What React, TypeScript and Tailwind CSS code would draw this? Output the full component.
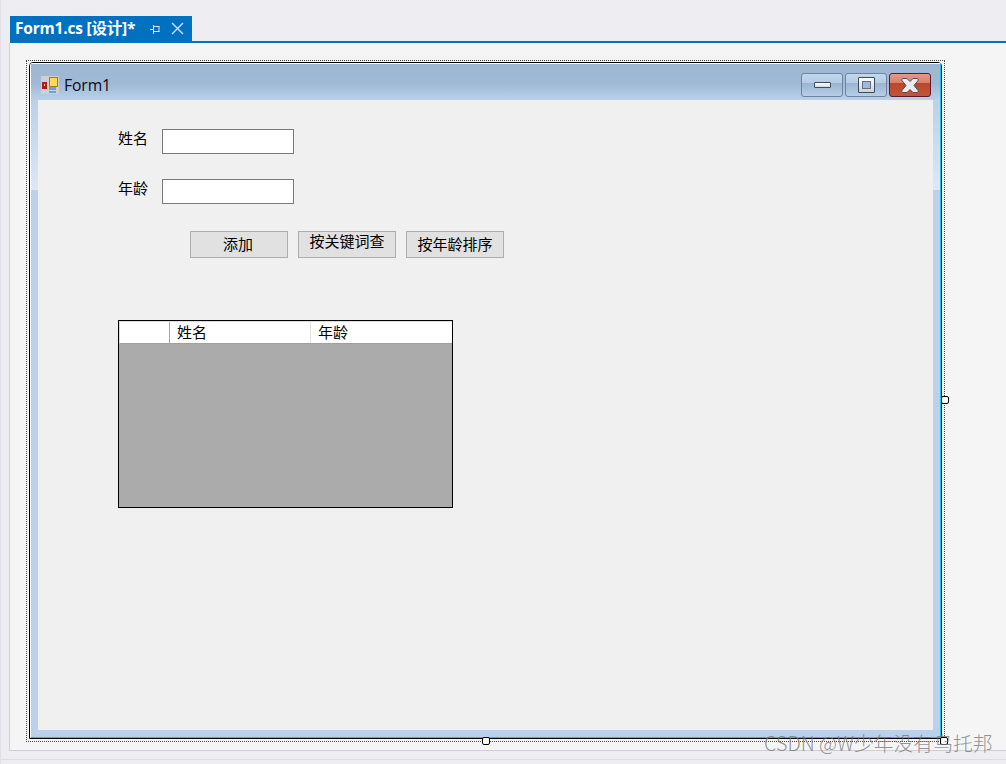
import React from "react";

const cjk = "font-['Noto_Sans_CJK_SC','Liberation_Sans',sans-serif]";

function Handle({ className }: { className: string }) {
  return <div className={`absolute w-[8px] h-[8px] bg-white border border-black rounded-[2px] ${className}`} />;
}

function CaptionButton({ close, children }: { close?: boolean; children: React.ReactNode }) {
  return (
    <div
      className={`relative w-[42px] h-[24px] rounded-[3px] border flex items-center justify-center overflow-hidden ${
        close
          ? "border-[#5a1c2c] bg-[linear-gradient(#e39a88_0%,#d9806c_40%,#b9472c_41%,#c25539_100%)]"
          : "border-[#6c83a3] bg-[linear-gradient(#c3d6ea_0%,#b6cce4_40%,#9ab4d0_41%,#b7cee6_100%)]"
      }`}
    >
      {children}
    </div>
  );
}

function FormIcon() {
  return (
    <svg width="18" height="18" viewBox="0 0 18 18" className="shrink-0">
      <rect x="0" y="0" width="18" height="18" fill="#cfd0cf" />
      <rect x="1" y="6" width="5" height="7" fill="#b01d13" />
      <rect x="3" y="8" width="1" height="2" fill="#f0c0b0" />
      <rect x="8.5" y="1.5" width="8" height="9" fill="#fbd95b" stroke="#a97c12" />
      <rect x="8" y="11" width="7" height="6" fill="#6d9fe0" />
      <rect x="8" y="14" width="7" height="1" fill="#bcd4f2" />
    </svg>
  );
}

function DataGrid() {
  return (
    <div className="w-[335px] h-[188px] border border-black bg-[#ababab] flex flex-col">
      <div className={`h-[23px] bg-white border-t border-l border-[#dcdcdc] border-b-[1px] border-b-[#a0a0a0] flex text-[15px] leading-[19px] text-black ${cjk}`}>
        <div className="w-[50px] border-r border-[#a8a8a8]" />
        <div className="w-[141px] pl-[7px] border-r border-[#e3e3e3]">姓名</div>
        <div className="flex-1 pl-[7px]">年龄</div>
      </div>
    </div>
  );
}

function FormButton({ label, up, nudge }: { label: string; up?: boolean; nudge?: boolean }) {
  return (
    <div className={`w-[98px] h-[27px] bg-[#e1e1e1] border border-[#adadad] text-center text-[15px] text-black ${up ? "leading-[17px]" : "leading-[23px]"} ${nudge ? "pr-[2px]" : ""} ${cjk}`}>
      {label}
    </div>
  );
}

function Field({ label, className }: { label: string; className?: string }) {
  return (
    <div className={`flex gap-[14px] ${className ?? ""}`}>
      <div className={`w-[30px] h-[20px] leading-[18px] text-[15px] whitespace-nowrap text-black ${cjk}`}>{label}</div>
      <div className="w-[132px] h-[25px] bg-white border border-[#7a7a7a]" />
    </div>
  );
}

export default function App() {
  return (
    <div className="relative w-[1006px] h-[764px] overflow-hidden bg-[#eeeef2] flex flex-col border-l border-[#dfdfe8]">
      <div className="pl-[9px] pt-[16px]">
        <div className="w-[182px] h-[25px] bg-[#0070c0] flex items-center pl-[5px] text-white">
          <span className="w-[120px] shrink-0 text-[15.5px] font-bold leading-none whitespace-nowrap font-['Open_Sans','Noto_Sans_CJK_SC',sans-serif] tracking-[-0.2px]">Form1.cs [设计]*</span>
          <svg width="12" height="12" viewBox="0 0 12 12" className="ml-[14px]" fill="none" stroke="#d5e6f5" strokeWidth="1">
            <path d="M1 6.5H4.5M4.5 2V11M4.5 3.5H10.5M4.5 8.5H10.5M10 3.5V8.5" />
          </svg>
          <svg width="13" height="13" viewBox="0 0 13 13" className="ml-[10px]" fill="none" stroke="#d5e6f5" strokeWidth="1.4">
            <path d="M1 1L12 12M12 1L1 12" />
          </svg>
        </div>
      </div>
      <div className="h-[2px] ml-[9px] bg-[#0070c0]" />
      <div className="ml-[8px] h-[708px] bg-[#f5f5f5] border-l border-b border-[#cccedb] pl-[16px] pt-[17px]">
        <div className="relative w-[919px] h-[682px] border border-dotted border-[#444444] pl-[2px] pt-[1px]">
          <div className="w-[913px] h-[677px] border border-black rounded-tl-[4px] rounded-tr-[4px]">
            <div className="h-full border-l border-t border-white border-r-[#14c3e8] border-b-[#14c3e8] border-r border-b rounded-tl-[3px] flex flex-col">
              <div className="h-[36px] shrink-0 bg-[linear-gradient(#9db6d2,#a0b9d5_55%,#b9d1ea)] flex items-start pl-[10px] pr-[9px]">
                <div className="mt-[12px]"><FormIcon /></div>
                <span className="mt-[11px] ml-[5px] text-[15.7px] leading-[20px] text-[#0a0a14] font-['Open_Sans',sans-serif] tracking-[-0.1px]">Form1</span>
                <div className="ml-auto mt-[9px] flex gap-[2px]">
                  <CaptionButton>
                    <div className="w-[17px] h-[6px] bg-[linear-gradient(#ffffff,#d8d8d8)] border border-[#3d4a63] rounded-[1px]" />
                  </CaptionButton>
                  <CaptionButton>
                    <div className="w-[17px] h-[16px] bg-[linear-gradient(#ffffff,#d0d0d0)] border border-[#3d4a63] rounded-[1px] p-[3px]">
                      <div className="h-full bg-[#9fb9d6] border border-[#5d708c]" />
                    </div>
                  </CaptionButton>
                  <CaptionButton close>
                    <svg width="18" height="17" viewBox="0 0 18 17">
                      <path
                        d="M1.5 1.5H6L9 4.5L12 1.5H16.5L17.5 3L13 8.5L17.5 14L16.5 15.5H12L9 12.5L6 15.5H1.5L0.5 14L5 8.5L0.5 3Z"
                        fill="#ececec"
                        stroke="#4e4e68"
                        strokeWidth="1"
                      />
                    </svg>
                  </CaptionButton>
                </div>
              </div>
              <div className="flex flex-1 min-h-0">
                <div className="w-[7px] bg-[#b9d1ea]">
                  <div className="h-[90px] bg-[linear-gradient(#b9d1ea,#dce8f5)]" />
                </div>
                <div className="flex-1 bg-[#f0f0f0] pl-[80px] pt-[29px]">
                  <Field label="姓名" />
                  <Field label="年龄" className="mt-[25px]" />
                  <div className="mt-[27px] ml-[72px] flex gap-[10px]">
                    <FormButton label="添加" nudge />
                    <FormButton label="按关键词查" up />
                    <FormButton label="按年龄排序" />
                  </div>
                  <div className="mt-[62px]">
                    <DataGrid />
                  </div>
                </div>
                <div className="w-[7px] bg-[#b9d1ea]">
                  <div className="h-[90px] bg-[linear-gradient(#b9d1ea,#dce8f5)]" />
                </div>
              </div>
              <div className="h-[7px] shrink-0 bg-[#b9d1ea]" />
            </div>
          </div>
        </div>
      </div>
      <div className="h-[8px]" />
      <div className="h-px bg-[#dcdce4]" />
      <Handle className="left-[940px] top-[396px]" />
      <Handle className="left-[481px] top-[737px]" />
      <Handle className="left-[939px] top-[737px]" />
      <div className={`absolute left-[763px] top-[729px] text-[19.8px] font-light leading-[28px] whitespace-nowrap text-[rgba(120,120,120,0.8)] ${cjk}`}>
        CSDN @W少年没有乌托邦
      </div>
    </div>
  );
}
